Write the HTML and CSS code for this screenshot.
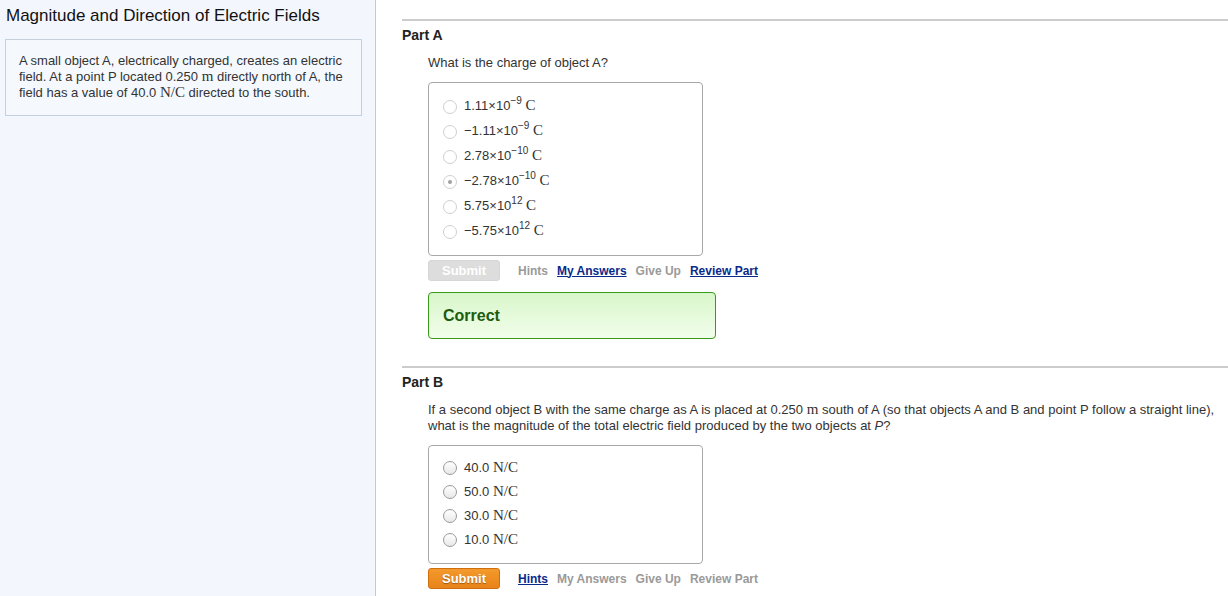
FILE: index.html
```html
<!DOCTYPE html>
<html lang="en">
<head>
  <meta charset="UTF-8">
  <meta name="viewport" content="width=device-width, initial-scale=1.0">
  <title>Magnitude and Direction of Electric Fields</title>
  <link rel="stylesheet" href="styles.css">
</head>
<body>
  <div class="page">
    <!-- Problem statement -->
    <aside class="sidebar">
      <h1 class="title">Magnitude and Direction of Electric Fields</h1>
      <div class="problem">
        A small object A, electrically charged, creates an electric field. At a point P located 0.250 <span class="math">m</span> directly north of A, the field has a value of 40.0 <span class="math">N/C</span> directed to the south.
      </div>
    </aside>

    <main class="parts">
      <!-- Part A -->
      <section class="part">
        <h2 class="part-title">Part A</h2>
        <div class="part-body">
          <p class="question">What is the charge of object A?</p>
          <div class="choices tall">
            <div class="choice"><span class="radio off"></span><span>1.11×10<sup>−9</sup> <span class="math">C</span></span></div>
            <div class="choice"><span class="radio off"></span><span>−1.11×10<sup>−9</sup> <span class="math">C</span></span></div>
            <div class="choice"><span class="radio off"></span><span>2.78×10<sup>−10</sup> <span class="math">C</span></span></div>
            <div class="choice"><span class="radio off checked"></span><span>−2.78×10<sup>−10</sup> <span class="math">C</span></span></div>
            <div class="choice"><span class="radio off"></span><span>5.75×10<sup>12</sup> <span class="math">C</span></span></div>
            <div class="choice"><span class="radio off"></span><span>−5.75×10<sup>12</sup> <span class="math">C</span></span></div>
          </div>
          <div class="actions">
            <button class="submit disabled" disabled>Submit</button>
            <span class="link muted">Hints</span>
            <a class="link" href="#">My Answers</a>
            <span class="link muted">Give Up</span>
            <a class="link" href="#">Review Part</a>
          </div>
          <div class="feedback">Correct</div>
        </div>
      </section>

      <!-- Part B -->
      <section class="part">
        <h2 class="part-title">Part B</h2>
        <div class="part-body">
          <p class="question">If a second object B with the same charge as A is placed at 0.250 <span class="math">m</span> south of A (so that objects A and B and point P follow a straight line), what is the magnitude of the total electric field produced by the two objects at <i>P</i>?</p>
          <div class="choices">
            <div class="choice"><span class="radio"></span><span>40.0 <span class="math">N/C</span></span></div>
            <div class="choice"><span class="radio"></span><span>50.0 <span class="math">N/C</span></span></div>
            <div class="choice"><span class="radio"></span><span>30.0 <span class="math">N/C</span></span></div>
            <div class="choice"><span class="radio"></span><span>10.0 <span class="math">N/C</span></span></div>
          </div>
          <div class="actions">
            <button class="submit">Submit</button>
            <a class="link" href="#">Hints</a>
            <span class="link muted">My Answers</span>
            <span class="link muted">Give Up</span>
            <span class="link muted">Review Part</span>
          </div>
        </div>
      </section>
    </main>
  </div>
</body>
</html>
```

FILE: styles.css
```css
/* General body styling */
body {
  font-family: 'Liberation Sans', Arial, sans-serif;
  font-size: 13px;
  color: #333;
  margin: 0;
  background-color: #ffffff;
}

.page {
  display: flex;
  min-height: 596px;
}

/* Left column with the problem text */
.sidebar {
  width: 375px;
  flex-shrink: 0;
  background-color: #f3f7fd;
  border-right: 1px solid #bccbd9;
}

.title {
  font-size: 17px;
  font-weight: normal;
  line-height: 20px;
  color: #111;
  margin: 6px 0 0 6px;
}

.problem {
  margin: 13px 0 0 5px;
  width: 329px;
  padding: 13px 13px 14px 13px;
  line-height: 16px;
  border: 1px solid #c4d0dc;
  background-color: #f5f9fe;
}

.math {
  font-family: 'Liberation Serif', 'Times New Roman', serif;
  font-size: 15px;
  line-height: 1;
}

/* Right column with the parts */
.parts {
  flex: 1;
  padding: 19px 0 0 26px;
}

.part {
  border-top: 2px solid #cccccc;
}

.part + .part {
  margin-top: 27px;
}

.part-title {
  font-size: 14px;
  font-weight: bold;
  line-height: 16px;
  color: #222;
  margin: 6px 0 0 0;
}

.part-body {
  padding-left: 26px;
}

.question {
  margin: 12px 0 0 0;
  line-height: 16px;
  padding-right: 6px;
}

/* Answer choices */
.choices {
  width: 259px;
  margin-top: 11px;
  padding: 9px 0 12px 14px;
  border: 1px solid #a8a8a8;
  border-radius: 4px;
}

.choice {
  display: flex;
  align-items: center;
  height: 24px;
}

.choices.tall {
  padding-top: 10px;
}

.choices.tall .choice {
  height: 25px;
}

.choice sup {
  font-size: 10px;
  line-height: 0;
  position: relative;
  top: -1px;
}

.radio {
  width: 12px;
  height: 12px;
  border: 1px solid #9a9a9a;
  border-radius: 50%;
  background: linear-gradient(#ffffff, #e8e8e8);
  margin-right: 7px;
  position: relative;
  top: 1px;
  flex-shrink: 0;
}

.radio.off {
  border-color: #cfcfcf;
  background: #ffffff;
}

.radio.checked::after {
  content: '';
  position: absolute;
  left: 4px;
  top: 4px;
  width: 4px;
  height: 4px;
  border-radius: 50%;
  background-color: #a0a0a0;
}

/* Submit row */
.actions {
  display: flex;
  align-items: center;
  gap: 9px;
  margin-top: 4px;
}

.submit {
  width: 72px;
  height: 21px;
  margin-right: 9px;
  font-family: 'Liberation Sans', Arial, sans-serif;
  font-size: 13px;
  font-weight: bold;
  color: #ffffff;
  border: 1px solid #d06d0c;
  border-radius: 3px;
  background: linear-gradient(#f39a2c, #e9821a);
  text-shadow: 0 1px 1px rgba(0, 0, 0, 0.35);
  padding: 0;
}

.submit.disabled {
  border-color: #d6d6d6;
  background: #dddddd;
  text-shadow: none;
}

.link {
  font-size: 12px;
  font-weight: bold;
  color: #0a2a8a;
}

.link.muted {
  color: #9a9a9a;
}

/* Feedback box */
.feedback {
  width: 272px;
  height: 45px;
  margin-top: 11px;
  padding-left: 14px;
  display: flex;
  align-items: center;
  font-size: 16px;
  font-weight: bold;
  color: #1d5b0e;
  border: 1px solid #3a9a1c;
  border-radius: 4px;
  background: linear-gradient(#d8f7ca, #f1fdeb);
}
```
